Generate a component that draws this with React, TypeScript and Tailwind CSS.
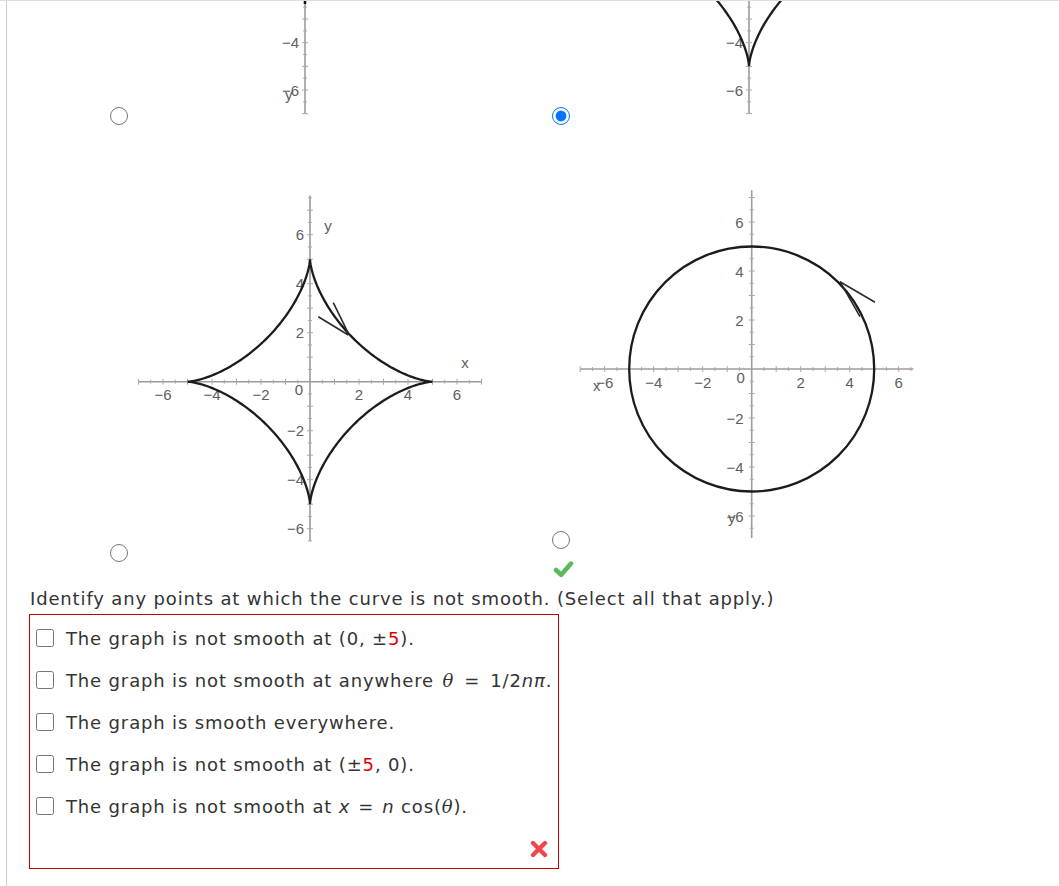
import React from "react";

const LABEL_FONT = '"Liberation Sans", Arial, sans-serif';

function astroidPath(a: number, ox: number, oy: number, u: number) {
  const pts: string[] = [];
  const N = 480;
  for (let i = 0; i <= N; i++) {
    const t = (i / N) * Math.PI * 2;
    const x = a * Math.pow(Math.cos(t), 3);
    const y = a * Math.pow(Math.sin(t), 3);
    pts.push(`${i === 0 ? "M" : "L"}${(ox + x * u).toFixed(2)} ${(oy - y * u).toFixed(2)}`);
  }
  return pts.join(" ") + " Z";
}

function fmt(v: number) {
  return v < 0 ? "\u2212" + Math.abs(v) : String(v);
}

type PlotProps = {
  w: number;
  h: number;
  ox: number;
  oy: number;
  u: number;
  xmin: number;
  xmax: number;
  ymin: number;
  ymax: number;
  xLabels?: number[];
  yLabels?: number[];
  yLabelGap?: number;
  zero?: boolean;
  children?: React.ReactNode;
};

const LBL = "#5e5e5e";

function Plot({ w, h, ox, oy, u, xmin, xmax, ymin, ymax, xLabels = [], yLabels = [], yLabelGap = 6, zero = true, children }: PlotProps) {
  const ticks: React.ReactNode[] = [];
  for (let k = Math.ceil(xmin * 2); k <= Math.floor(xmax * 2); k++) {
    if (k === 0) continue;
    const x = ox + (k / 2) * u;
    const L = k % 2 === 0 ? 3 : 2;
    ticks.push(<line key={"xt" + k} x1={x} x2={x} y1={oy - L} y2={oy + L} stroke="#a8a8a8" strokeWidth={1} />);
  }
  for (let k = Math.ceil(ymin * 2); k <= Math.floor(ymax * 2); k++) {
    if (k === 0) continue;
    const y = oy - (k / 2) * u;
    const L = k % 2 === 0 ? 3 : 2;
    ticks.push(<line key={"yt" + k} y1={y} y2={y} x1={ox - L} x2={ox + L} stroke="#a8a8a8" strokeWidth={1} />);
  }
  return (
    <svg width={w} height={h} className="block shrink-0" style={{ fontFamily: LABEL_FONT }}>
      <line x1={ox + xmin * u} x2={ox + xmax * u} y1={oy} y2={oy} stroke="#9c9c9c" strokeWidth={1.6} />
      <line x1={ox} x2={ox} y1={oy - ymax * u} y2={oy - ymin * u} stroke="#9c9c9c" strokeWidth={1.6} />
      {ticks}
      {xLabels.map((v) => (
        <text key={"xl" + v} x={ox + v * u} y={oy + 18.5} textAnchor="middle" fontSize={15} fill={LBL}>
          {fmt(v)}
        </text>
      ))}
      {yLabels.map((v) => (
        <text key={"yl" + v} x={ox - yLabelGap} y={oy - v * u + 5.5} textAnchor="end" fontSize={15} fill={LBL}>
          {fmt(v)}
        </text>
      ))}
      {zero && (
        <text x={ox - 11} y={oy + 13.5} textAnchor="middle" fontSize={15} fill={LBL}>
          0
        </text>
      )}
      {children}
    </svg>
  );
}

function Radio({ checked = false }: { checked?: boolean }) {
  return <input type="radio" name="graph" defaultChecked={checked} className="m-0 block h-[18px] w-[18px] shrink-0" />;
}

function Check() {
  return (
    <svg width="21" height="19" viewBox="0 0 21 19" className="block">
      <path d="M3 10 L8.2 14.8 L18 3.6" fill="none" stroke="#5cb85c" strokeWidth="4.6" strokeLinecap="round" strokeLinejoin="round" />
    </svg>
  );
}

function Cross() {
  return (
    <svg width="18" height="18" viewBox="0 0 18 18" className="block">
      <path d="M3 3 L15 15 M15 3 L3 15" fill="none" stroke="#f0484a" strokeWidth="4.4" strokeLinecap="round" />
    </svg>
  );
}

const RED = "text-[#e00000]";

function Item({ children }: { children: React.ReactNode }) {
  return (
    <div className="flex h-[42px] items-center">
      <input type="checkbox" className="m-0 block h-[18px] w-[18px] shrink-0" />
      <span className="ml-[12px] whitespace-nowrap">{children}</span>
    </div>
  );
}

export default function App() {
  const axisLabels = [-6, -4, -2, 2, 4, 6];
  return (
    <div className="min-h-[886px] w-full border-t border-[#dddddd] bg-white">
      <div
        className="ml-[6px] min-h-[885px] border-l border-[#cccccc] text-[18px] text-[#333333]"
        style={{ fontFamily: '"DejaVu Sans", Verdana, sans-serif' }}
      >
        {/* Row 1 (scrolled, partially visible) */}
        <div className="flex pl-[103px]">
          <div className="flex w-[442px] items-end">
            <Radio />
            <div className="ml-[4px]">
              <Plot w={350} h={124} ox={173} oy={-52.9} u={23.65} xmin={-7} xmax={7} ymin={-7} ymax={7} yLabels={axisLabels} zero={false}>
                <text x={153} y={99} fontSize={15} fill={LBL}>
                  y
                </text>
                <line x1={173} x2={173} y1={-4} y2={3} stroke="#111" strokeWidth={2.6} />
              </Plot>
            </div>
          </div>
          <div className="flex items-end">
            <Radio checked />
            <div className="ml-[4px]">
              <Plot w={345} h={124} ox={175} oy={-52.9} u={23.65} xmin={-7} xmax={7} ymin={-7} ymax={7} yLabels={axisLabels} zero={false}>
                <path d={astroidPath(5, 175, -52.9, 23.65)} fill="none" stroke="#1c1c1c" strokeWidth={2.3} />
              </Plot>
            </div>
          </div>
        </div>

        {/* Row 2 */}
        <div className="mt-[65px] flex pl-[103px]">
          <div className="flex w-[442px] items-end self-start">
            <Radio />
            <div className="ml-[4px]">
              <Plot w={350} h={372} ox={178} oy={191.7} u={24.5} xmin={-7} xmax={7} ymin={-6.5} ymax={7.6} xLabels={axisLabels} yLabels={axisLabels}>
                <text x={333} y={178} textAnchor="middle" fontSize={15} fill={LBL}>
                  x
                </text>
                <text x={196} y={41} textAnchor="middle" fontSize={15} fill={LBL}>
                  y
                </text>
                <path d={astroidPath(5, 178, 191.7, 24.5)} fill="none" stroke="#1c1c1c" strokeWidth={2.3} />
                <line x1={186.3} y1={126.7} x2={216.3} y2={145} stroke="#2a2a2a" strokeWidth={1.6} />
                <line x1={201.3} y1={112.7} x2={216.3} y2={143.3} stroke="#2a2a2a" strokeWidth={1.6} />
              </Plot>
            </div>
          </div>
          <div className="flex flex-col">
            <div className="flex items-end">
              <Radio />
              <div className="ml-[4px]">
                <Plot w={345} h={359} ox={177.7} oy={179} u={24.5} xmin={-7} xmax={6.6} ymin={-6.9} ymax={7.3} xLabels={axisLabels} yLabels={axisLabels} yLabelGap={8}>
                  <text x={19} y={201} fontSize={15} fill={LBL}>
                    x
                  </text>
                  <text x={154} y={333} fontSize={15} fill={LBL}>
                    y
                  </text>
                  <circle cx={177.7} cy={179} r={5 * 24.5} fill="none" stroke="#1c1c1c" strokeWidth={2.3} />
                  <line x1={266} y1={91.7} x2={301} y2={112.3} stroke="#2a2a2a" strokeWidth={1.6} />
                  <line x1={266} y1={91.7} x2={286} y2={126.7} stroke="#2a2a2a" strokeWidth={1.6} />
                </Plot>
              </div>
            </div>
            <div className="ml-[1px] mt-[11px]">
              <Check />
            </div>
          </div>
        </div>

        {/* Question */}
        <div className="pl-[22px] tracking-[0.85px]">
          <p className="mt-[8px] whitespace-nowrap pl-[1px] leading-[24px]">
            Identify any points at which the curve is not smooth. (Select all that apply.)
          </p>
          <div className="mt-[3px] w-[530px] border border-[#cc0000] pb-[10px] pl-[6px] pr-[10px] pt-[2px]">
            <Item>
              The graph is not smooth at (0, ±<span className={RED}>5</span>).
            </Item>
            <Item>
              The graph is not smooth at anywhere{" "}
              <span className="ml-[2px]">
                <i style={{ fontFamily: '"DejaVu Serif", serif' }}>θ</i>
                <span className="mx-[10px]">=</span>1/2<i>nπ</i>.
              </span>
            </Item>
            <Item>The graph is smooth everywhere.</Item>
            <Item>
              The graph is not smooth at (±<span className={RED}>5</span>, 0).
            </Item>
            <Item>
              The graph is not smooth at <i>x</i>
              <span className="mx-[8px]">=</span>
              <i>n</i> cos(<i style={{ fontFamily: '"DejaVu Serif", serif' }}>θ</i>).
            </Item>
            <div className="mt-[13px] flex justify-end">
              <Cross />
            </div>
          </div>
        </div>
      </div>
    </div>
  );
}
